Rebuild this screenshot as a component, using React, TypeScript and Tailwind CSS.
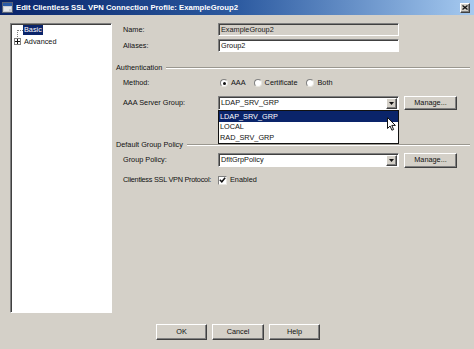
const font = "font-['Liberation_Sans',Arial,sans-serif]";

const sunken =
  'border border-t-[#808080] border-l-[#808080] border-r-white border-b-white shadow-[inset_1px_1px_0_#404040]';
const raised =
  'border border-t-white border-l-white border-r-[#404040] border-b-[#404040] shadow-[inset_-1px_-1px_0_#808080]';

function Label({ children, tight }: { children: React.ReactNode; tight?: boolean }) {
  return (
    <div
      className={`w-[102px] pl-[7px] shrink-0 whitespace-nowrap text-[7.3px] leading-none text-[#111] ${
        tight ? 'tracking-[-0.25px]' : ''
      }`}
    >
      {children}
    </div>
  );
}

function GroupHeader({ title }: { title: string }) {
  return (
    <div className="flex items-center h-[9px] pr-[2px]">
      <span className="text-[7.3px] leading-none text-[#111]">{title}</span>
      <div className="flex-1 ml-[4px] h-[2px] border-t border-t-[#9a978f] border-b border-b-white" />
    </div>
  );
}

function DropArrow() {
  return (
    <div className={`${raised} bg-[#d4d0c8] w-[11px] h-[11px] flex items-center justify-center shrink-0`}>
      <svg width="5" height="3" viewBox="0 0 5 3">
        <path d="M0 0h5L2.5 3z" fill="#111" />
      </svg>
    </div>
  );
}

function Combo({ value }: { value: string }) {
  return (
    <div className={`${sunken} bg-white w-[181px] h-[14px] flex items-center pl-[2px] pr-[1px]`}>
      <span className="flex-1 text-[7.3px] leading-none text-[#111]">{value}</span>
      <DropArrow />
    </div>
  );
}

function WinButton({ children, w }: { children: React.ReactNode; w: string }) {
  return (
    <div className={`${raised} bg-[#d4d0c8] ${w} flex items-center justify-center text-[7.3px] leading-none text-[#111]`}>
      {children}
    </div>
  );
}

function Radio({ checked, label, gap }: { checked?: boolean; label: string; gap: string }) {
  return (
    <div className={`flex items-center ${gap}`}>
      <div className="w-[8px] h-[8px] rounded-full bg-white border border-t-[#808080] border-l-[#808080] border-r-[#e8e6e0] border-b-[#e8e6e0] flex items-center justify-center">
        {checked && <div className="w-[3px] h-[3px] rounded-full bg-[#111]" />}
      </div>
      <span className="ml-[3px] text-[7.3px] leading-none text-[#111]">{label}</span>
    </div>
  );
}

export default function App() {
  return (
    <div className={`${font} w-[474px] h-[349px] bg-[#d4d0c8] flex flex-col overflow-hidden`}>
      {/* title bar */}
      <div className="h-[15px] shrink-0 flex items-center bg-gradient-to-r from-[#0a246a] via-[#2c5aa0] to-[#a6caf0] pl-[2px] pr-[4px]">
        <svg width="11" height="11" viewBox="0 0 11 11" className="shrink-0">
          <rect x="0.5" y="0.5" width="10" height="10" fill="#c8ccd4" stroke="#5a6478" />
          <rect x="1" y="1" width="9" height="3" fill="#2a5aa8" />
          <path d="M2 6h7M2 8h5" stroke="#fff" strokeWidth="1" />
        </svg>
        <span className="ml-[3px] text-[7.7px] font-bold leading-none text-white">
          Edit Clientless SSL VPN Connection Profile: ExampleGroup2
        </span>
        <div className="flex-1" />
        <div className={`${raised} bg-[#d4d0c8] w-[10px] h-[10px] flex items-center justify-center`}>
          <svg width="6" height="5" viewBox="0 0 6 5">
            <path d="M0.5 0.5l5 4M5.5 0.5l-5 4" stroke="#111" strokeWidth="1.3" />
          </svg>
        </div>
      </div>

      {/* body */}
      <div className="h-[305px] shrink-0 flex">
        {/* tree */}
        <div className={`${sunken} ml-[10px] mt-[8px] w-[102px] h-[290px] bg-white shrink-0 relative`}>
          <div className="flex items-center h-[10px] mt-[1px] pl-[6px]">
            <div className="w-[6px] border-t border-dotted border-[#808080]" />
            <span className="bg-[#0a246a] text-white text-[7.3px] leading-none px-[1px] py-[1px]">Basic</span>
          </div>
          <div className="flex items-center h-[11px] mt-[1px] pl-[3px]">
            <div className="w-[7px] h-[7px] border border-[#808080] bg-white flex items-center justify-center">
              <svg width="5" height="5" viewBox="0 0 5 5">
                <path d="M0 2.5h5M2.5 0v5" stroke="#111" strokeWidth="1" />
              </svg>
            </div>
            <span className="ml-[3px] text-[7.3px] leading-none text-[#111]">Advanced</span>
          </div>
          <div className="absolute left-[6px] top-[6px] h-[7px] border-l border-dotted border-[#808080]" />
        </div>

        {/* right pane */}
        <div className="ml-[4px] w-[356px] flex flex-col relative">
          <div className="flex items-center mt-[8px] h-[13px]">
            <Label>Name:</Label>
            <div className={`${sunken} bg-[#d4d0c8] w-[181px] h-[13px] flex items-center pl-[2px] text-[7.3px] leading-none text-[#222]`}>
              ExampleGroup2
            </div>
          </div>
          <div className="flex items-center mt-[3px] h-[13px]">
            <Label>Aliases:</Label>
            <div className={`${sunken} bg-white w-[181px] h-[13px] flex items-center pl-[2px] text-[7.3px] leading-none text-[#111]`}>
              Group2
            </div>
          </div>

          <div className="mt-[11px]">
            <GroupHeader title="Authentication" />
          </div>
          <div className="flex items-center mt-[6px] h-[10px]">
            <Label>Method:</Label>
            <div className="flex items-center pl-[2px]">
              <Radio checked label="AAA" gap="" />
              <Radio label="Certificate" gap="ml-[8px]" />
              <Radio label="Both" gap="ml-[9px]" />
            </div>
          </div>
          <div className="flex items-center mt-[8px] h-[14px] relative">
            <Label>AAA Server Group:</Label>
            <Combo value="LDAP_SRV_GRP" />
            <div className="ml-[5px]">
              <WinButton w="w-[53px] h-[14px]">Manage...</WinButton>
            </div>
            {/* open dropdown list */}
            <div className="absolute left-[102px] top-[14px] w-[181px] h-[34px] bg-white border border-[#111] z-10 flex flex-col text-[7.3px] leading-none">
              <div className="h-[11px] flex items-center pl-[1px] bg-[#0a246a] text-white">LDAP_SRV_GRP</div>
              <div className="h-[11px] flex items-center pl-[1px] text-[#111]">LOCAL</div>
              <div className="h-[11px] flex items-center pl-[1px] text-[#111]">RAD_SRV_GRP</div>
            </div>
            <svg width="9" height="14" viewBox="0 0 9 14" className="absolute left-[271px] top-[21px] z-20">
              <path d="M0.5 0.5v11l2.6-2.5 1.8 4.2 1.7-.7-1.8-4.1h3.6z" fill="#fff" stroke="#111" strokeWidth="1" strokeLinejoin="round" />
            </svg>
          </div>

          <div className="mt-[30px]">
            <GroupHeader title="Default Group Policy" />
          </div>
          <div className="flex items-center mt-[4px] h-[14px]">
            <Label>Group Policy:</Label>
            <Combo value="DfltGrpPolicy" />
            <div className="ml-[5px]">
              <WinButton w="w-[53px] h-[15px]">Manage...</WinButton>
            </div>
          </div>
          <div className="flex items-center mt-[8px] h-[10px]">
            <Label tight>Clientless SSL VPN Protocol:</Label>
            <div className="w-[9px] h-[9px] bg-white border border-t-[#808080] border-l-[#808080] border-r-[#e8e6e0] border-b-[#e8e6e0] flex items-center justify-center">
              <svg width="7" height="6" viewBox="0 0 7 6">
                <path d="M0.8 2.8l2 2 3.4-4" stroke="#111" strokeWidth="1.5" fill="none" />
              </svg>
            </div>
            <span className="ml-[3px] text-[7.3px] leading-none text-[#111]">Enabled</span>
          </div>
        </div>
      </div>

      {/* footer buttons */}
      <div className="flex justify-center gap-[5px] pt-[4px] pl-[2px]">
        <WinButton w="w-[51px] h-[16px]">OK</WinButton>
        <WinButton w="w-[52px] h-[16px]">Cancel</WinButton>
        <WinButton w="w-[51px] h-[16px]">Help</WinButton>
      </div>
    </div>
  );
}
